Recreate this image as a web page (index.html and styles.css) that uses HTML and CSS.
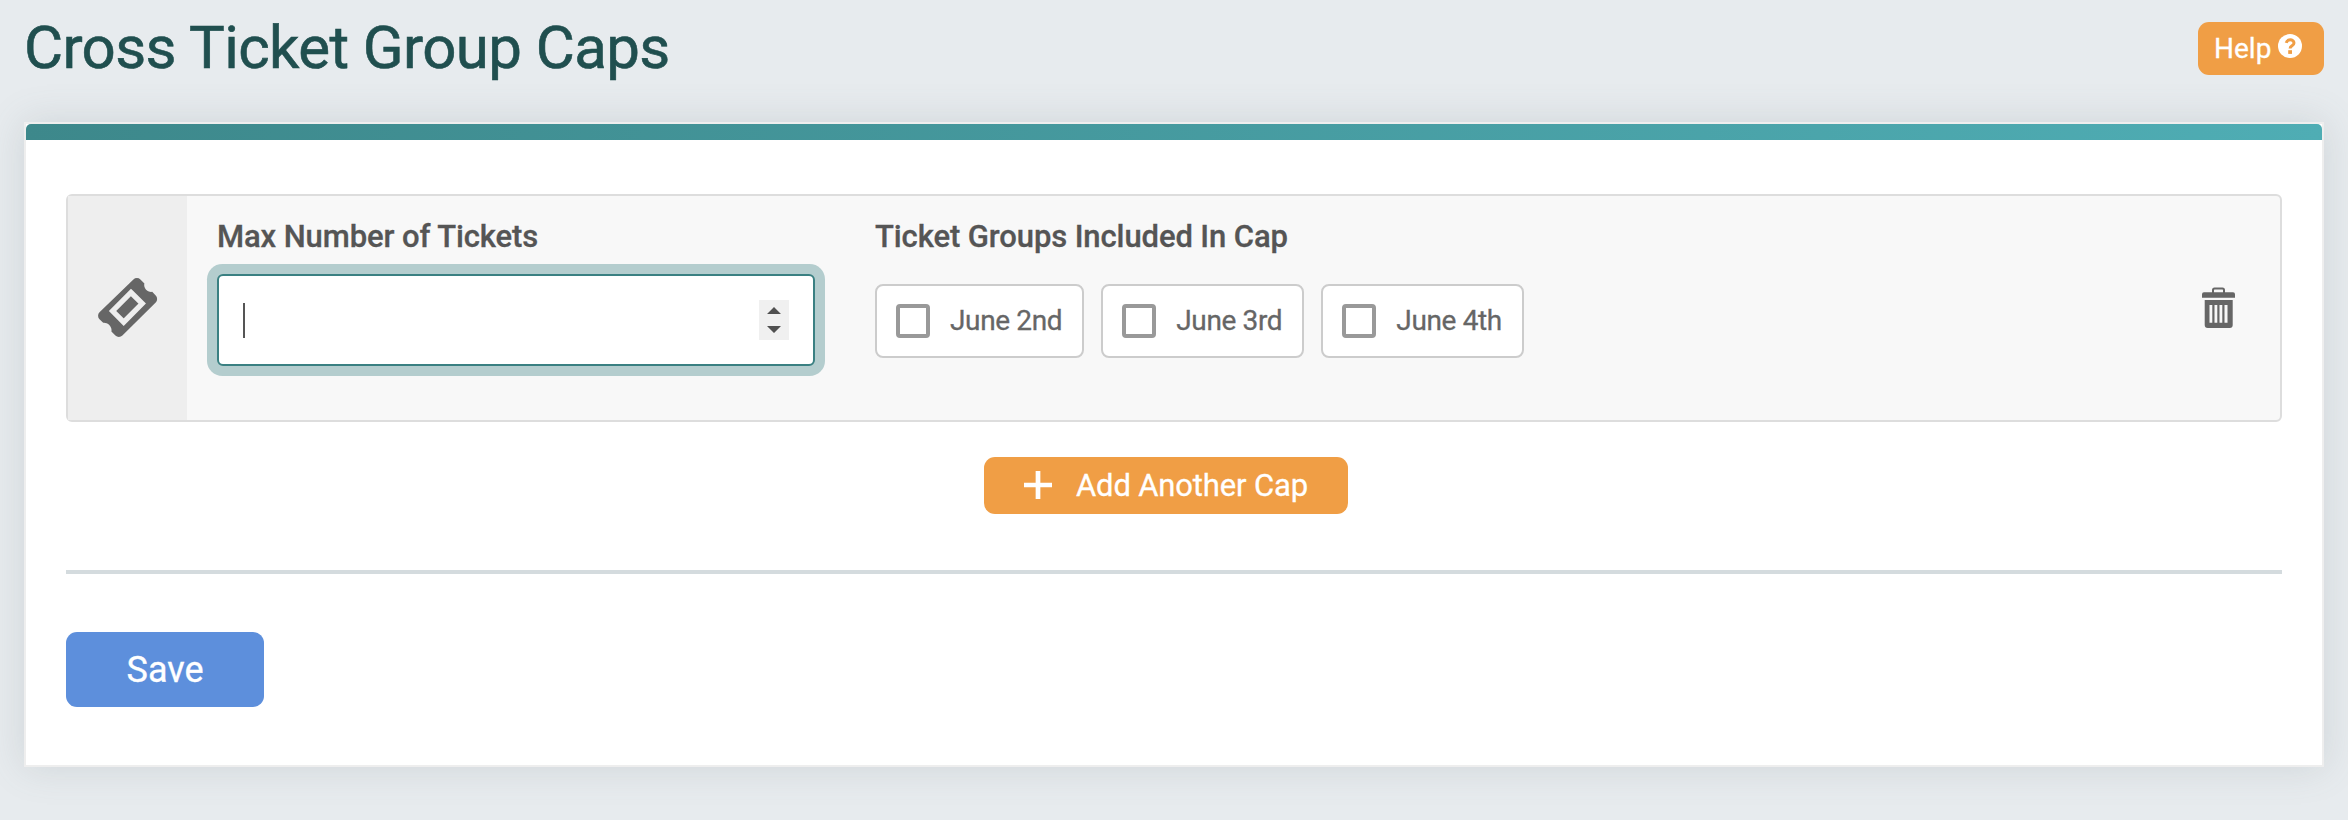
FILE: index.html
```
<!DOCTYPE html>
<html lang="en">
	<head>
		<meta charset="utf-8">
		<title>Cross Ticket Group Caps</title>
		<link rel="stylesheet" href="styles.css">
	</head>
	<body>

		<header class="page-header">
			<h1>Cross Ticket Group Caps</h1>
			<a class="btn btn-help" href="#">
				<span>Help</span>
				<svg class="icon-help" viewBox="0 0 24 24">
					<circle cx="12" cy="12" r="12" fill="#fff"/>
					<path d="M8.2 8.9C8.8 6.6 10.3 5.8 12.2 5.8c2 0 3.8 1.2 3.8 3.2 0 2.8-3.9 2.7-3.9 5.4" fill="none" stroke="#f09e45" stroke-width="3"/>
					<rect x="10.2" y="16.2" width="3.8" height="3.7" fill="#f09e45"/>
				</svg>
			</a>
		</header>

		<div class="card">
			<div class="card-bar"></div>
			<div class="card-body">

				<div class="cap">
					<div class="cap-handle">
						<svg class="icon-ticket" viewBox="0 0 60 60">
							<path d="M35.4 1.5a5 5 0 0 1 7 0L46.4 5.5a6.8 6.8 0 0 0 7.8 8.3l3.5 3.6a5 5 0 0 1 0 7L24.4 57.5a5 5 0 0 1-7 0L13.4 53.6a7.5 7.5 0 0 0-8.2-8.8L1.5 41.2a5 5 0 0 1 0-7z" fill="#666"/>
							<path d="M33 14.5L44.2 25.5 25.7 44.2 14.6 33z" fill="#666" stroke="#eee" stroke-width="5.3"/>
						</svg>
					</div>
					<div class="cap-max">
						<label>Max Number of Tickets</label>
						<div class="number-input">
							<span class="caret"></span>
							<svg class="spinner" viewBox="0 0 30 40">
								<path d="M8 14l7-7 7 7zM8 26l7 7 7-7z" fill="#505050"/>
							</svg>
						</div>
					</div>
					<div class="cap-groups">
						<label>Ticket Groups Included In Cap</label>
						<ul>
							<li><i class="checkbox"></i><span>June 2nd</span></li>
							<li><i class="checkbox"></i><span>June 3rd</span></li>
							<li><i class="checkbox"></i><span>June 4th</span></li>
						</ul>
					</div>
					<a class="cap-delete" href="#">
						<svg class="icon-trash" viewBox="0 0 33 41">
							<path d="M11 6V3q0-1.5 1.5-1.5h8q1.5 0 1.5 1.5V6" fill="none" stroke="#666" stroke-width="2"/>
							<path d="M2 5.3h29q2 0 2 2V10.8H0V7.3q0-2 2-2z" fill="#666"/>
							<path fill-rule="evenodd" d="M2.7 13h28v25q0 3-3 3h-22q-3 0-3-3zM7.5 18v17.8h2.8V18zM12.5 18v17.8h2.8V18zM17.5 18v17.8h2.8V18zM22.5 18v17.8h3V18z" fill="#666"/>
						</svg>
					</a>
				</div>

				<div class="add-row">
					<a class="btn btn-add" href="#">
						<svg class="icon-plus" viewBox="0 0 28 28">
							<path d="M14 0v28M0 14h28" stroke="#fff" stroke-width="4.7"/>
						</svg>
						<span>Add Another Cap</span>
					</a>
				</div>

				<hr>

				<a class="btn btn-save" href="#">Save</a>

			</div>
		</div>

	</body>
</html>
```
FILE: styles.css
```
* {
	margin: 0;
	padding: 0;
	box-sizing: border-box;
}

body {
	height: 820px;
	padding: 0 24px;
	overflow: hidden;
	background-color: #e7ebee;
	font-family: Roboto, "Liberation Sans", sans-serif;
	color: #666;
	-webkit-text-stroke: .3px;
}

ul {
	list-style: none;
}

svg {
	display: block;
	flex: none;
}

a {
	color: inherit;
	text-decoration: none;
}

.page-header {
	display: flex;
	justify-content: space-between;
	align-items: flex-start;
	height: 122px;
}

.page-header h1 {
	padding-top: 13px;
	font-size: 60px;
	line-height: 70px;
	font-weight: 400;
	letter-spacing: -.6px;
	color: #204f4f;
	-webkit-text-stroke: .6px;
}

.btn {
	display: flex;
	align-items: center;
	border-radius: 11px;
	background-color: #f09e45;
	color: #fff;
}

.btn-help {
	width: 126px;
	height: 53px;
	margin-top: 22px;
	padding-left: 16px;
	font-size: 28px;
	line-height: 53px;
}

.icon-help {
	width: 24px;
	height: 24px;
	margin: -5px 0 0 7px;
}

.card {
	height: 645px;
	border: 2px solid #eee;
	background-color: #fff;
	box-shadow: 0 0 36px rgba(100, 115, 120, .19);
}

.card-bar {
	height: 16px;
	border-radius: 5px 5px 0 0;
	background: linear-gradient(to right, #3d888b, #4fadb4);
}

.card-body {
	padding: 54px 40px 0;
}

.cap {
	display: flex;
	height: 228px;
	border: 2px solid #ddd;
	border-radius: 6px;
	background-color: #f8f8f8;
}

.cap-handle {
	display: flex;
	align-items: center;
	justify-content: center;
	width: 119px;
	background-color: #eee;
}

.icon-ticket {
	width: 60px;
	height: 60px;
}

.cap label {
	display: block;
	height: 36px;
	font-size: 31px;
	line-height: 36px;
	font-weight: 500;
	letter-spacing: -.1px;
	color: #555;
}

.cap-max {
	width: 598px;
	margin-left: 30px;
	padding-top: 23px;
}

.number-input {
	display: flex;
	align-items: center;
	justify-content: space-between;
	height: 92px;
	margin-top: 19px;
	padding: 0 24px;
	border: 2px solid #3a8082;
	border-radius: 6px;
	background-color: #fff;
	box-shadow: 0 0 0 10px #b4cdce;
}

.caret {
	width: 2px;
	height: 35px;
	background-color: #555;
}

.spinner {
	width: 30px;
	height: 40px;
	background-color: #f0f0f0;
}

.cap-groups {
	flex: 1;
	margin-left: 60px;
	padding-top: 23px;
}

.cap-groups ul {
	display: flex;
	gap: 17px;
	margin-top: 29px;
}

.cap-groups li {
	display: flex;
	align-items: center;
	height: 74px;
	padding: 0 20px 1px 19px;
	border: 2px solid #ccc;
	border-radius: 8px;
	background-color: #fff;
	font-size: 28px;
	line-height: 34px;
	letter-spacing: -.36px;
}

.checkbox {
	width: 34px;
	height: 34px;
	margin-right: 20px;
	border: 4px solid #999;
	border-radius: 4px;
}

.cap-delete {
	padding: 91px 45px 0 0;
}

.icon-trash {
	width: 33px;
	height: 41px;
}

.add-row {
	display: flex;
	padding: 35px 0 0 918px;
}

.btn-add {
	width: 364px;
	height: 57px;
	padding-left: 40px;
	font-size: 31px;
	letter-spacing: -.15px;
}

.icon-plus {
	width: 28px;
	height: 28px;
	margin: -2px 24px 0 0;
}

hr {
	height: 4px;
	margin: 56px 0 58px;
	border: none;
	background-color: #d4dbde;
}

.btn-save {
	justify-content: center;
	width: 198px;
	height: 75px;
	background-color: #5d8fdc;
	font-size: 36px;
}
```
